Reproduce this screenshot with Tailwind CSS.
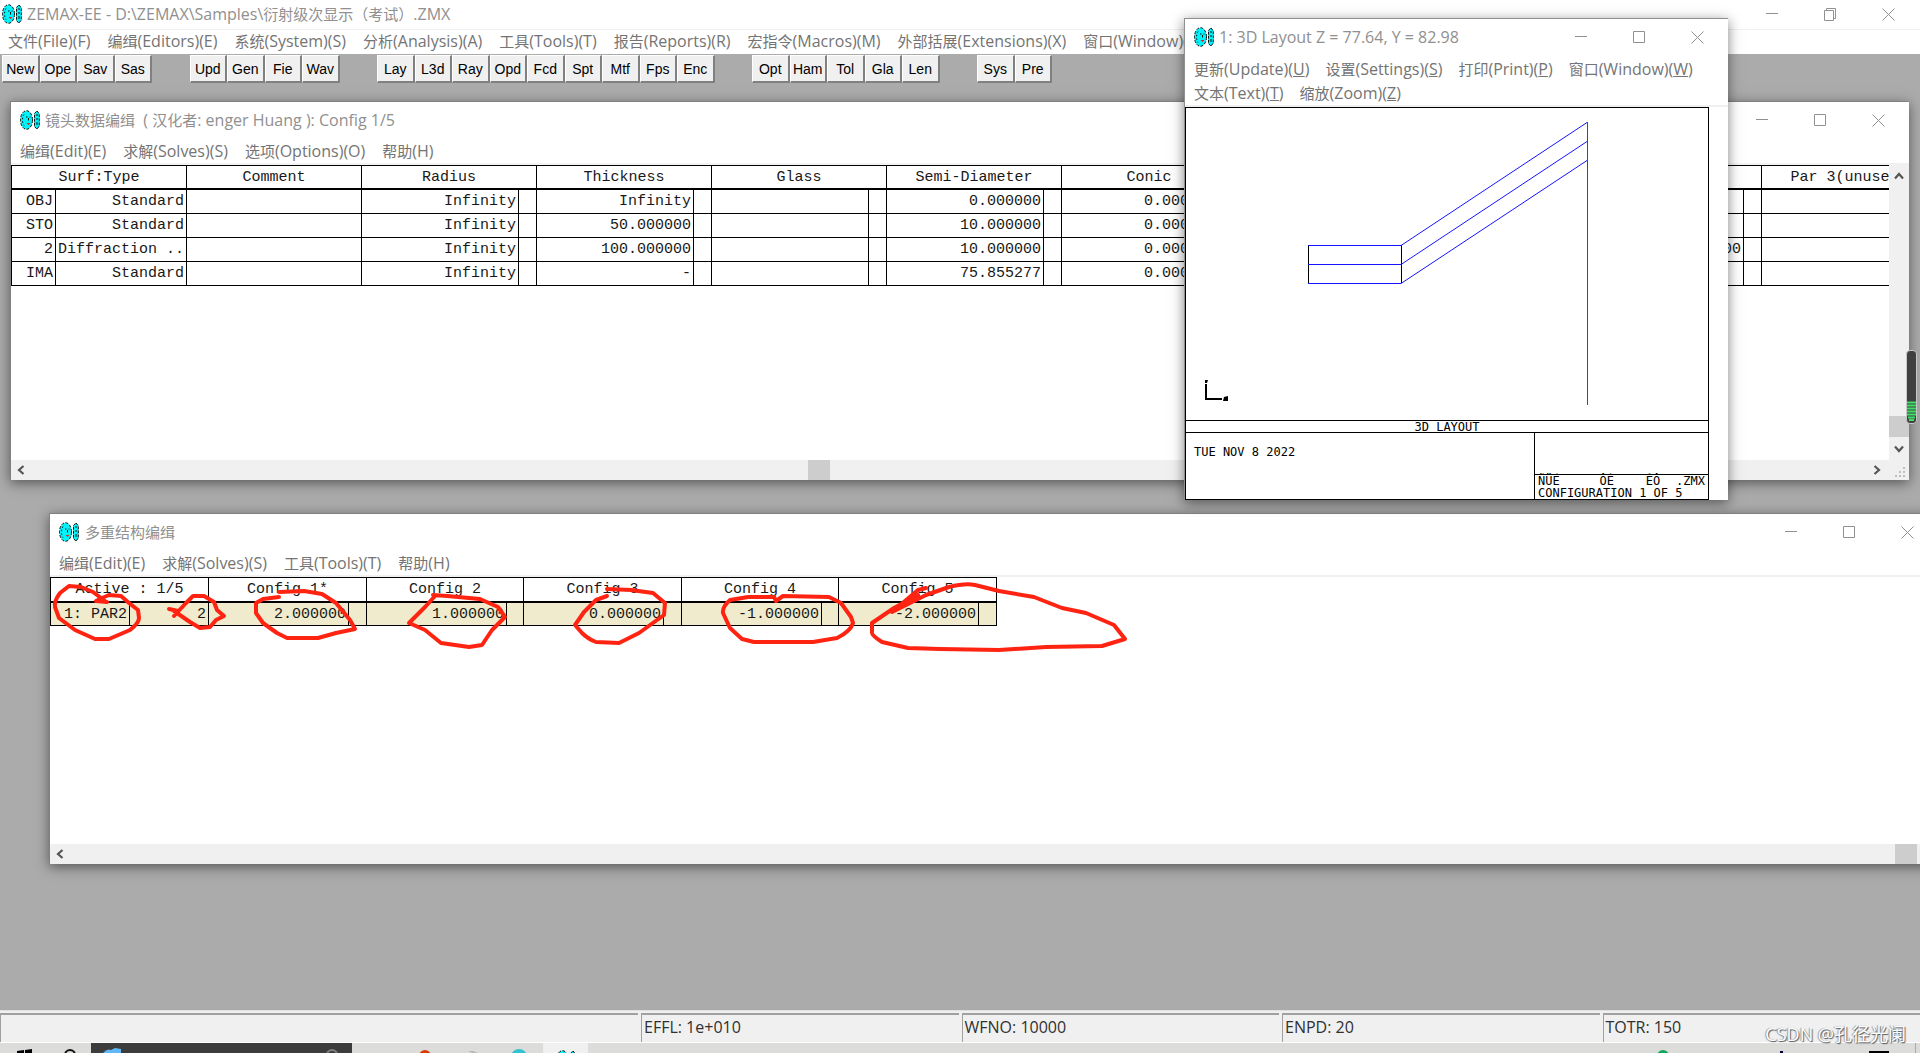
<!DOCTYPE html>
<html lang="zh-CN">
<head>
    <meta charset="UTF-8">
    <meta name="viewport" content="width=device-width, initial-scale=1.0">
    <title>ZEMAX-EE</title>
    <script src="https://cdn.jsdelivr.net/npm/@tailwindcss/browser@4"></script>
</head>
<body class="bg-[#ababab] font-['Open_Sans','Noto_Sans_CJK_SC',sans-serif] text-[16px] leading-5">

    <!-- Shared icons -->
    <svg class="hidden">
        <symbol id="app" viewBox="0 0 20 20">
            <ellipse cx="6.5" cy="10" rx="6" ry="9.3" fill="#00f4fc" stroke="#111" stroke-dasharray="3 1.5"/>
            <path d="M4 4.5c-2 3-2 8 0 11" fill="none" stroke="#111" stroke-dasharray="1.5 2"/>
            <path d="M6 7h1.500M9.500 7h1M8.500 8v2.500" stroke="#111" fill="none"/>
            <path d="M6.500 13h4L8.500 15z" fill="#f01818"/>
            <path d="M14.500 3.500L17 .8 19.300 4v12L17 19.200 14.500 16.500V3.500z" fill="#00f4fc" stroke="#111" stroke-dasharray="3 1"/>
            <path d="M17 4v2m0 2v2m0 2v3" stroke="#111" fill="none"/>
        </symbol>
        <symbol id="min" viewBox="0 0 13 13"><path d="M0 5.500h12" stroke="currentColor" fill="none"/></symbol>
        <symbol id="max" viewBox="0 0 13 13"><path d="M.5 .5h11v11H.5z" stroke="currentColor" fill="none"/></symbol>
        <symbol id="restore" viewBox="0 0 13 13"><path d="M.5 2.500h9v10h-9zM2.500 2V.5h9v10H10" stroke="currentColor" fill="none"/></symbol>
        <symbol id="close" viewBox="0 0 13 13"><path d="M.5 .5l12 12M12.500 .5l-12 12" stroke="currentColor" fill="none"/></symbol>
        <symbol id="arrow" viewBox="0 0 10 10"><path d="M7.500 1L3 5l4.500 4" stroke="#555" stroke-width="2.200" fill="none"/></symbol>
    </svg>

    <div class="relative flex min-h-screen flex-col overflow-hidden">

        <!-- Main title bar -->
        <header class="flex h-[29px] items-center bg-white pb-px pl-[2px] text-[#909090]">
            <svg class="size-5"><use href="#app"/></svg>
            <h1 class="ml-[5px] flex-1 whitespace-pre [&_span]:text-[15px]">ZEMAX-EE - D:\ZEMAX\Samples\<span>衍射级次显示（考试）</span>.ZMX</h1>
            <div class="flex pr-[3px]">
                <button class="flex w-[58px] justify-center" aria-label="Minimize"><svg class="size-[13px]"><use href="#min"/></svg></button>
                <button class="flex w-[58px] justify-center" aria-label="Restore"><svg class="size-[13px]"><use href="#restore"/></svg></button>
                <button class="flex w-[58px] justify-center" aria-label="Close"><svg class="size-[13px]"><use href="#close"/></svg></button>
            </div>
        </header>

        <nav class="flex h-[25px] items-center gap-[17px] whitespace-nowrap border-t border-[#f0f0f0] bg-white pb-[2px] pl-2 text-[#747474] [&_span]:text-[15px]">
            <button><span>文件</span>(File)(F)</button>
            <button><span>编缉</span>(Editors)(E)</button>
            <button><span>系统</span>(System)(S)</button>
            <button><span>分析</span>(Analysis)(A)</button>
            <button><span>工具</span>(Tools)(T)</button>
            <button><span>报告</span>(Reports)(R)</button>
            <button><span>宏指令</span>(Macros)(M)</button>
            <button><span>外部括展</span>(Extensions)(X)</button>
            <button><span>窗口</span>(Window)(W)</button>
        </nav>

        <!-- Toolbar -->
        <div class="grid h-[29px] w-[1050px] grid-cols-28 pt-px ml-[2px] font-['Liberation_Sans',Arial,sans-serif] text-[14px] text-black [&>button]:border [&>button]:border-r-2 [&>button]:border-b-2 [&>button]:border-t-white [&>button]:border-l-white [&>button]:border-r-[#808080] [&>button]:border-b-[#808080] [&>button]:bg-[#f0f0f0]">
            <button>New</button>
            <button>Ope</button>
            <button>Sav</button>
            <button>Sas</button>
            <button class="col-start-6">Upd</button>
            <button>Gen</button>
            <button>Fie</button>
            <button>Wav</button>
            <button class="col-start-11">Lay</button>
            <button>L3d</button>
            <button>Ray</button>
            <button>Opd</button>
            <button>Fcd</button>
            <button>Spt</button>
            <button>Mtf</button>
            <button>Fps</button>
            <button>Enc</button>
            <button class="col-start-21">Opt</button>
            <button>Ham</button>
            <button>Tol</button>
            <button>Gla</button>
            <button>Len</button>
            <button class="col-start-27">Sys</button>
            <button>Pre</button>
        </div>

        <!-- Lens data editor -->
        <section class="absolute top-[101px] right-[11px] left-[10px] flex h-[379px] flex-col border-t border-l border-[#808080] bg-white shadow-[0_3px_12px_rgba(0,0,0,0.5)]">
            <div class="flex h-9 shrink-0 items-center pl-[9px] text-[#909090]">
                <svg class="size-5"><use href="#app"/></svg>
                <h2 class="ml-[5px] flex-1 whitespace-pre [&_span]:text-[15px]"><span>镜头数据编缉</span>  ( <span>汉化者</span>: enger Huang ): Config 1/5</h2>
                <div class="flex pr-[2px]">
                    <button class="flex w-[58px] justify-center" aria-label="Minimize"><svg class="size-[13px]"><use href="#min"/></svg></button>
                    <button class="flex w-[58px] justify-center" aria-label="Maximize"><svg class="size-[13px]"><use href="#max"/></svg></button>
                    <button class="flex w-[58px] justify-center" aria-label="Close"><svg class="size-[13px]"><use href="#close"/></svg></button>
                </div>
            </div>
            <nav class="flex h-[25px] shrink-0 items-center gap-[17px] whitespace-nowrap pt-px pl-[9px] text-[#747474] [&_span]:text-[15px]">
                <button><span>编缉</span>(Edit)(E)</button>
                <button><span>求解</span>(Solves)(S)</button>
                <button><span>选项</span>(Options)(O)</button>
                <button><span>帮助</span>(H)</button>
            </nav>
            <div class="flex min-h-0 flex-1">
                <div class="min-w-0 flex-1 overflow-hidden border-t-2 border-[#f4f4f4]">
                    <table class="w-[1925px] table-fixed border-collapse text-right font-['Liberation_Mono','Courier_New',monospace] text-[15px] leading-5 whitespace-nowrap text-[#181818] [&_td]:h-6 [&_td]:border [&_td]:border-black [&_td]:px-[2px] [&_td]:pt-[2px] [&_th]:h-[23px] [&_th]:border [&_th]:border-b-2 [&_th]:border-black [&_th]:pt-[2px] [&_th]:text-center [&_th]:font-normal">
                        <colgroup>
                            <col class="w-11"><col class="w-[131px]">
                            <col class="w-[175px]">
                            <col class="w-[157px]"><col class="w-[18px]">
                            <col class="w-[157px]"><col class="w-[18px]">
                            <col class="w-[157px]"><col class="w-[18px]">
                            <col class="w-[157px]"><col class="w-[18px]">
                            <col class="w-[157px]"><col class="w-[18px]">
                            <col class="w-[157px]"><col class="w-[18px]">
                            <col class="w-[157px]"><col class="w-[18px]">
                            <col class="w-[157px]"><col class="w-[18px]">
                            <col class="w-[175px]">
                        </colgroup>
                        <thead>
                            <tr><th colspan="2">Surf:Type</th><th>Comment</th><th colspan="2">Radius</th><th colspan="2">Thickness</th><th colspan="2">Glass</th><th colspan="2">Semi-Diameter</th><th colspan="2">Conic</th><th colspan="2"></th><th colspan="2"></th><th colspan="2"></th><th>Par 3(unused)</th></tr>
                        </thead>
                        <tbody>
                            <tr><td>OBJ</td><td>Standard</td><td></td><td>Infinity</td><td></td><td>Infinity</td><td></td><td></td><td></td><td>0.000000</td><td></td><td>0.000000</td><td></td><td></td><td></td><td></td><td></td><td></td><td></td><td></td></tr>
                            <tr><td>STO</td><td>Standard</td><td></td><td>Infinity</td><td></td><td>50.000000</td><td></td><td></td><td></td><td>10.000000</td><td></td><td>0.000000</td><td></td><td></td><td></td><td></td><td></td><td></td><td></td><td></td></tr>
                            <tr><td>2</td><td>Diffraction ..</td><td></td><td>Infinity</td><td></td><td>100.000000</td><td></td><td></td><td></td><td>10.000000</td><td></td><td>0.000000</td><td></td><td></td><td></td><td></td><td></td><td>2.000000</td><td></td><td></td></tr>
                            <tr><td>IMA</td><td>Standard</td><td></td><td>Infinity</td><td></td><td>-</td><td></td><td></td><td></td><td>75.855277</td><td></td><td>0.000000</td><td></td><td></td><td></td><td></td><td></td><td></td><td></td><td></td></tr>
                        </tbody>
                    </table>
                </div>
                <!-- Vertical scroll bar -->
                <div class="flex w-5 shrink-0 flex-col items-center bg-[#f0f0f0] pt-2 pb-[6px]">
                    <button aria-label="Scroll up"><svg class="size-[10px] rotate-90"><use href="#arrow"/></svg></button>
                    <div class="mt-auto mb-[7px] h-[21px] w-full bg-[#cdcdcd]"></div>
                    <button aria-label="Scroll down"><svg class="size-[10px] -rotate-90"><use href="#arrow"/></svg></button>
                </div>
            </div>
            <!-- Horizontal scroll bar -->
            <div class="flex h-5 shrink-0 items-center bg-[#f0f0f0] pl-[5px]">
                <button aria-label="Scroll left"><svg class="size-[10px]"><use href="#arrow"/></svg></button>
                <div class="ml-[782px] h-full w-[22px] bg-[#cdcdcd]"></div>
                <button class="ml-auto" aria-label="Scroll right"><svg class="size-[10px] rotate-180"><use href="#arrow"/></svg></button>
                <svg class="mt-1 mr-[4px] ml-[13px] size-[10px]" viewBox="0 0 10 10" fill="#bfbfbf"><path d="M8 0h2v2H8zM4 4h2v2H4zM8 4h2v2H8zM0 8h2v2H0zM4 8h2v2H4zM8 8h2v2H8z"/></svg>
            </div>
        </section>

        <!-- Multi-configuration editor -->
        <section class="absolute top-[513px] right-[-18px] left-[49px] flex h-[351px] flex-col border-t border-l border-[#808080] bg-white shadow-[0_3px_12px_rgba(0,0,0,0.5)]">
            <div class="flex h-9 shrink-0 items-center pl-[9px] text-[#909090]">
                <svg class="size-5"><use href="#app"/></svg>
                <h2 class="ml-[6px] flex-1 text-[15px]">多重结构编缉</h2>
                <div class="flex pr-[2px]">
                    <button class="flex w-[58px] justify-center" aria-label="Minimize"><svg class="size-[13px]"><use href="#min"/></svg></button>
                    <button class="flex w-[58px] justify-center" aria-label="Maximize"><svg class="size-[13px]"><use href="#max"/></svg></button>
                    <button class="flex w-[58px] justify-center" aria-label="Close"><svg class="size-[13px]"><use href="#close"/></svg></button>
                </div>
            </div>
            <nav class="flex h-[25px] shrink-0 items-center gap-[17px] whitespace-nowrap pt-px pl-[9px] text-[#747474] [&_span]:text-[15px]">
                <button><span>编缉</span>(Edit)(E)</button>
                <button><span>求解</span>(Solves)(S)</button>
                <button><span>工具</span>(Tools)(T)</button>
                <button><span>帮助</span>(H)</button>
            </nav>
            <div class="relative flex-1 border-t-2 border-[#f0f0f0]">
                <table class="w-[946px] table-fixed border-collapse text-right font-['Liberation_Mono','Courier_New',monospace] text-[15px] leading-5 whitespace-nowrap text-[#181818] [&_td]:h-6 [&_td]:border [&_td]:border-black [&_td]:bg-[#f0ebcd] [&_td]:px-[2px] [&_td]:pt-[2px] [&_th]:h-6 [&_th]:border [&_th]:border-b-2 [&_th]:border-black [&_th]:pt-[2px] [&_th]:text-center [&_th]:font-normal">
                    <colgroup>
                        <col class="w-[79px]"><col class="w-[79px]">
                        <col class="w-[140px]"><col class="w-[18px]">
                        <col class="w-[140px]"><col class="w-[17px]">
                        <col class="w-[140px]"><col class="w-[18px]">
                        <col class="w-[140px]"><col class="w-[17px]">
                        <col class="w-[140px]"><col class="w-[18px]">
                    </colgroup>
                    <thead>
                        <tr><th colspan="2">Active : 1/5</th><th colspan="2">Config 1*</th><th colspan="2">Config 2</th><th colspan="2">Config 3</th><th colspan="2">Config 4</th><th colspan="2">Config 5</th></tr>
                    </thead>
                    <tbody>
                        <tr><td>1: PAR2</td><td>2</td><td>2.000000</td><td></td><td>1.000000</td><td></td><td>0.000000</td><td></td><td>-1.000000</td><td></td><td>-2.000000</td><td></td></tr>
                    </tbody>
                </table>
                <!-- Pen marks -->
                <svg class="absolute top-0 left-px h-20 w-[1090px]" viewBox="0 0 1090 80" fill="none" stroke="#ff2412" stroke-width="4" stroke-linejoin="round" stroke-linecap="round">
                    <path d="M54 24L42 15 30 10 18 9 9 16Q3 24 4 30L8 41 24 53 44 62H58L79 53Q88 46 88 41L87 33 78 26 70 19 58 18 51 21 45 24 56 25"/>
                    <path d="M118 32L127 34 123 39 135 26 142 19H153L163 25 166 33 173 39 165 43 159 50 149 51 139 45 123 34"/>
                    <path d="M228 20L212 22 205 26V36L212 46 226 56 236 61H267L285 56 304 52 299 43 285 26 271 17 253 14 228 15"/>
                    <path d="M384 19L374 30 358 46 374 53 390 66 418 70 431 68 441 53 454 40 447 30 429 22 396 19 382 18"/>
                    <path d="M556 19L545 23 533 35 524 48 531 56Q537 62 545 65L568 66 588 56 613 38 614 26 602 16 580 13 556 12"/>
                    <path d="M725 24L723 20H697L679 23Q671 30 672 36L679 51 691 62 703 65H762L786 61Q800 54 802 46L800 40 790 26 778 20 732 19 725 24"/>
                    <path d="M875 11L867 13 841 35 875 18 898 10Q914 6 924 8L948 14 983 20 1011 31 1035 36 1063 48 1074 62 1051 69 995 70 948 73 889 72 857 71 831 65Q820 58 821 55V46L843 31 867 18"/>
                </svg>
            </div>
            <div class="flex h-5 shrink-0 items-center bg-[#f0f0f0] pl-[5px]">
                <button aria-label="Scroll left"><svg class="size-[10px]"><use href="#arrow"/></svg></button>
                <div class="mr-[21px] ml-auto h-full w-[22px] bg-[#cdcdcd]"></div>
            </div>
        </section>

        <!-- 3D layout window -->
        <section class="absolute top-[18px] left-[1184px] flex h-[482px] w-[544px] flex-col border-t border-l border-[#909090] bg-white shadow-[0_3px_12px_rgba(0,0,0,0.5)]">
            <div class="flex h-9 shrink-0 items-center pl-[9px] text-[#909090]">
                <svg class="size-5"><use href="#app"/></svg>
                <h2 class="ml-[5px] flex-1">1: 3D Layout Z = 77.64, Y = 82.98</h2>
                <div class="flex pr-[2px]">
                    <button class="flex w-[58px] justify-center" aria-label="Minimize"><svg class="size-[13px]"><use href="#min"/></svg></button>
                    <button class="flex w-[58px] justify-center" aria-label="Maximize"><svg class="size-[13px]"><use href="#max"/></svg></button>
                    <button class="flex w-[58px] justify-center" aria-label="Close"><svg class="size-[13px]"><use href="#close"/></svg></button>
                </div>
            </div>
            <nav class="flex h-[50px] shrink-0 flex-wrap content-start items-center gap-x-4 whitespace-nowrap pt-[2px] pl-[9px] text-[#747474] [&>button]:h-6 [&_span]:text-[15px]">
                <button><span>更新</span>(Update)(<u>U</u>)</button>
                <button><span>设置</span>(Settings)(<u>S</u>)</button>
                <button><span>打印</span>(Print)(<u>P</u>)</button>
                <button><span>窗口</span>(Window)(<u>W</u>)</button>
                <button><span>文本</span>(Text)(<u>T</u>)</button>
                <button><span>缩放</span>(Zoom)(<u>Z</u>)</button>
            </nav>
            <div class="h-[2px] bg-[#f0f0f0]"></div>
            <div class="mr-[19px] flex flex-1 flex-col border border-black font-['DejaVu_Sans_Mono',monospace] text-[12px] leading-3 text-black">
                <svg class="h-[312px] w-full" viewBox="1186 108 522 312" fill="none">
                    <path d="M1308.500 245v38M1401.500 245v38" stroke="#000"/>
                    <path d="M1587.500 122v283" stroke="#f00"/>
                    <path d="M1308 245.500h93L1587 122.500M1308 264.500h93L1587 141.500M1308 283.500h93L1587 160.500" stroke="#1414ff"/>
                    <path d="M1206 384v15h16" stroke="#000" stroke-width="2"/>
                    <path d="M1205 380h3l-1 3h-2zM1224 397l4-1v5h-5z" fill="#000"/>
                </svg>
                <div class="h-[13px] border-y border-black text-center">3D LAYOUT</div>
                <div class="flex flex-1">
                    <div class="flex-1 pt-[13px] pl-2">TUE NOV 8 2022</div>
                    <div class="flex w-[174px] flex-col border-l border-black">
                        <div class="flex-1"></div>
                        <div class="border-t border-black px-[3px]">
                            <div class="flex justify-between"><span>ÑÜÉ</span><span class="ml-6">ÔÊ</span><span class="ml-4">ÊÔ</span><span>.ZMX</span></div>
                            <div>CONFIGURATION 1 OF 5</div>
                        </div>
                    </div>
                </div>
            </div>
        </section>

        <!-- Level meter at the screen edge -->
        <div class="absolute top-[350px] right-[3px] flex h-[74px] w-[11px] flex-col justify-end rounded-[4px] border border-[#c8c8c8] bg-[#404040] pb-[2px]">
            <svg class="h-5 w-full" viewBox="0 0 9 20" preserveAspectRatio="none"><path d="M0 1.500h9M0 4.500h9M0 7.500h9M0 10.500h9M0 13.500h9M1 16.500h7M2 19h5" stroke="#3ee06a" stroke-width="2"/></svg>
        </div>

        <!-- Status bar -->
        <footer class="mt-auto grid h-8 grid-cols-6 gap-x-[3px] border-t border-[#e0e0e0] bg-[#f0f0f0] pt-[2px] text-[#303030] [&>div]:border-t-2 [&>div]:border-l [&>div]:border-[#a0a0a0] [&>div]:pt-[2px] [&>div]:pl-[2px]">
            <div class="col-span-2"></div>
            <div>EFFL: 1e+010</div>
            <div>WFNO: 10000</div>
            <div>ENPD: 20</div>
            <div>TOTR: 150</div>
        </footer>

        <!-- Top edge of the taskbar -->
        <div class="flex h-[11px] overflow-hidden border-t border-white bg-[#dcdcda]">
            <svg class="h-[10px] w-[91px]" viewBox="0 0 91 10"><path d="M17 8l7-1v3h-7zM25 7l7-1v4h-7z" fill="#000"/><circle cx="70" cy="12" r="5" fill="none" stroke="#111" stroke-width="2"/></svg>
            <div class="flex w-[261px] justify-between bg-[#3c3c3c] pr-3 pl-3">
                <svg class="h-[10px] w-5" viewBox="0 0 20 10"><path d="M0 10Q4 5 8 7L12 5 18 6v4z" fill="#60b8f8"/></svg>
                <svg class="h-[10px] w-4" viewBox="0 0 16 10"><circle cx="8" cy="12" r="5" fill="none" stroke="#808080" stroke-width="2"/></svg>
            </div>
            <svg class="h-[10px] w-[191px]" viewBox="0 0 191 10"><circle cx="73" cy="13" r="6" fill="#d83b01"/><path d="M116 8h5l5 2h-6z" fill="#b8b8b8"/><circle cx="167" cy="14" r="8" fill="#30c4d0"/></svg>
            <div class="flex w-[45px] justify-center bg-[#f0f0f0] pt-[7px]"><svg class="size-5"><use href="#app"/></svg></div>
            <svg class="ml-auto h-[10px] w-[280px]" viewBox="0 0 280 10"><circle cx="23" cy="13" r="6" fill="#10a858"/><path d="M140 8h3v2h-3z" fill="#003"/><path d="M229 8h20v2h-20z" fill="#000"/><path d="M275.500 0v10" stroke="#aaa"/></svg>
        </div>

        <div class="absolute right-[14px] bottom-[6px] text-[18px] leading-[26px] text-white [text-shadow:1px_1px_1px_#555,-1px_0_1px_#999]">CSDN @孔径光阑</div>
    </div>

</body>
</html>
